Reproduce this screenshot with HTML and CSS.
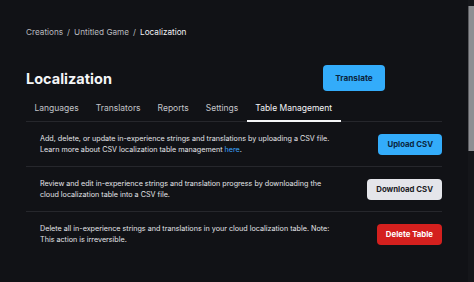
FILE: index.html
```html
<!DOCTYPE html>
<html>
<head>
<meta charset="utf-8">
<link rel="stylesheet" href="styles.css">
</head>
<body>
<div class="page">
  <nav class="crumbs">
    <span class="crumb">Creations</span><span class="sep">/</span><span class="crumb">Untitled Game</span><span class="sep">/</span><span class="crumb current">Localization</span>
  </nav>
  <header class="head">
    <h1 class="title">Localization</h1>
    <button class="btn btn-blue btn-translate">Translate</button>
  </header>
  <div class="tabs">
    <span class="tab">Languages</span>
    <span class="tab">Translators</span>
    <span class="tab">Reports</span>
    <span class="tab">Settings</span>
    <span class="tab active">Table Management</span>
  </div>
  <section class="row">
    <p class="desc">Add, delete, or update in-experience strings and translations by uploading a CSV file.<br>Learn more about CSV localization table management <a class="link">here</a>.</p>
    <button class="btn btn-blue">Upload CSV</button>
  </section>
  <section class="row">
    <p class="desc">Review and edit in-experience strings and translation progress by downloading the<br>cloud localization table into a CSV file.</p>
    <button class="btn btn-light">Download CSV</button>
  </section>
  <section class="row last">
    <p class="desc">Delete all in-experience strings and translations in your cloud localization table. Note:<br>This action is irreversible.</p>
    <button class="btn btn-red">Delete Table</button>
  </section>
</div>
<div class="scrollbar"><div class="thumb"></div></div>
</body>
</html>
```
FILE: styles.css
```css
html, body {
  margin: 0;
  padding: 0;
  background: #111216;
  height: 100%;
  overflow: hidden;
}
body {
  font-family: "Inter", "Noto Sans", sans-serif;
  color: #e6e7ea;
  position: relative;
}
.page {
  width: 416px;
  padding: 26px 0 0 26px;
}
.crumbs {
  font-size: 8.2px;
  line-height: 12px;
  color: #b8b9be;
  display: flex;
  align-items: center;
}
.sep {
  margin: 0 4px;
}
.crumb.current {
  color: #f2f3f5;
}
.head {
  display: flex;
  align-items: center;
  margin-top: 27px;
  height: 26px;
}
.title {
  margin: 0;
  font-size: 14.5px;
  font-weight: 700;
  color: #f4f5f7;
  flex: 1;
}
.btn {
  font-family: inherit;
  border: none;
  border-radius: 4px;
  font-size: 7.8px;
  font-weight: 700;
  padding: 0 9px;
  height: 21px;
  cursor: pointer;
}
.btn-translate {
  width: 62px;
  height: 26px;
  margin-right: 57px;
  font-size: 8.2px;
  padding: 0;
}
.btn-blue {
  background: #33acfa;
  color: #0a2540;
}
.btn-light {
  background: #e4e5ea;
  color: #1a1b1f;
}
.btn-red {
  background: #d4201e;
  color: #ffffff;
}
.tabs {
  display: flex;
  margin-top: 5px;
  border-bottom: 1px solid #26272c;
  font-size: 8.5px;
  color: #c3c4c9;
}
.tab {
  padding: 6px 8.5px 7px;
  line-height: 12px;
}
.tab.active {
  color: #f4f5f7;
  border-bottom: 2px solid #f4f5f7;
  margin-bottom: -1px;
  padding-bottom: 6px;
}
.row {
  display: flex;
  align-items: center;
  justify-content: space-between;
  padding: 11px 0 11px 14px;
  border-bottom: 1px solid #26272c;
}
.row.last {
  border-bottom: none;
}
.desc {
  margin: 0;
  font-size: 7.2px;
  line-height: 11px;
  color: #e4e5e9;
}
.link {
  color: #3ea6ff;
}
.scrollbar {
  position: absolute;
  top: 0;
  right: 0;
  width: 6px;
  height: 282px;
  background: #15161a;
}
.thumb {
  margin-top: 6px;
  height: 145px;
  background: #8e8f93;
  border-left: 1px solid #5a5b5f;
}
```
